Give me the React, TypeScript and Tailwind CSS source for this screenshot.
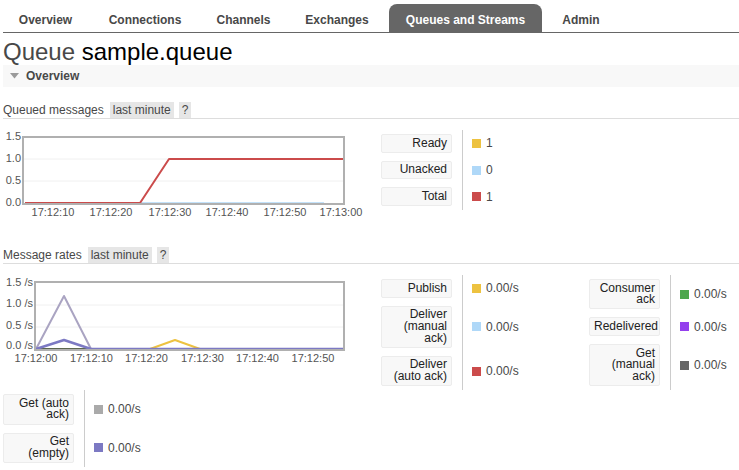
import React from "react";

type Row = { label: string[]; color: string; value: string };

function Legend({ rows, className = "" }: { rows: Row[]; className?: string }) {
  return (
    <div className={`grid grid-cols-[81px_auto] self-start ${className}`}>
      {rows.map((r, i) => (
        <React.Fragment key={i}>
          <div className="py-[4px] pr-[10px]">
            <div className="w-[71px] border border-[#ececec] rounded-[2px] bg-[#f8f8f8] px-[4px] py-[2.5px] text-right leading-[11.7px] text-[12px] text-[#222] whitespace-pre-line">
              {r.label.join("\n")}
            </div>
          </div>
          <div className="border-l border-[#cccccc] pl-[9px] flex items-center gap-[5px] text-[12px] text-[#484848]">
            <span className="inline-block w-[9px] h-[9px]" style={{ backgroundColor: r.color }} />
            <span>{r.value}</span>
          </div>
        </React.Fragment>
      ))}
    </div>
  );
}

function SectionHeader({ title }: { title: string }) {
  return (
    <div className="flex items-stretch h-[17px] border-b border-[#dddddd] text-[12px] text-[#484848]">
      <span className="leading-[17px]">{title}</span>
      <span className="ml-[6px] bg-[#e6e6e6] px-[3px] leading-[17px]">last minute</span>
      <span className="ml-[5px] bg-[#e6e6e6] px-[3px] leading-[17px]">?</span>
    </div>
  );
}

function QueuedChart() {
  const xs = [
    ["17:12:10", 50],
    ["17:12:20", 108],
    ["17:12:30", 167],
    ["17:12:40", 224],
    ["17:12:50", 282],
    ["17:13:00", 338],
  ] as const;
  const ys = [
    ["1.5", 7],
    ["1.0", 29],
    ["0.5", 51],
    ["0.0", 73],
  ] as const;
  return (
    <svg width="365" height="90" viewBox="0 0 365 90" className="shrink-0 font-[family-name:'Liberation_Sans',Arial,sans-serif]">
      <line x1="21" y1="29" x2="340" y2="29" stroke="#f0f0f0" strokeWidth="1" />
      <line x1="21" y1="51" x2="340" y2="51" stroke="#f0f0f0" strokeWidth="1" />
      <polyline points="137,73.5 321,73.5" fill="none" stroke="#afd8f8" strokeWidth="2.5" />
      <polyline points="22,73 137,73 166,29 340,29" fill="none" stroke="#cb4b4b" strokeWidth="2" strokeLinejoin="round" />
      <rect x="20" y="7" width="321" height="67" fill="none" stroke="#b0b0b0" strokeWidth="2" />
      {ys.map(([t, y]) => (
        <text key={t} x="18" y={y} textAnchor="end" dominantBaseline="middle" fontSize="11" fill="#545454">
          {t}
        </text>
      ))}
      {xs.map(([t, x]) => (
        <text key={t} x={x} y="83" textAnchor="middle" dominantBaseline="middle" fontSize="11" fill="#545454">
          {t}
        </text>
      ))}
    </svg>
  );
}

function RatesChart() {
  const xs = [
    ["17:12:00", 33],
    ["17:12:10", 88.5],
    ["17:12:20", 143.5],
    ["17:12:30", 199.5],
    ["17:12:40", 254.5],
    ["17:12:50", 310],
  ] as const;
  const ys = [
    ["1.5 /s", 8],
    ["1.0 /s", 29],
    ["0.5 /s", 51],
    ["0.0 /s", 71.5],
  ] as const;
  return (
    <svg width="365" height="90" viewBox="0 0 365 90" className="shrink-0 font-[family-name:'Liberation_Sans',Arial,sans-serif]">
      <line x1="33" y1="30" x2="340" y2="30" stroke="#f0f0f0" strokeWidth="1" />
      <line x1="33" y1="52" x2="340" y2="52" stroke="#f0f0f0" strokeWidth="1" />
      <polyline points="147,74 172,65 197,74" fill="none" stroke="#edc240" strokeWidth="2" strokeLinejoin="round" />
      <polyline points="33,74 88,74" fill="none" stroke="#5c6650" strokeWidth="2" />
      <polyline points="33,74 61,21 88,74" fill="none" stroke="#aaa4c2" strokeWidth="2" strokeLinejoin="round" />
      <polyline points="33,74 61,65 88,74 340,74" fill="none" stroke="#7c79c3" strokeWidth="2.5" strokeLinejoin="round" />
      <rect x="32" y="7" width="309" height="68" fill="none" stroke="#b0b0b0" strokeWidth="2" />
      {ys.map(([t, y]) => (
        <text key={t} x="30" y={y} textAnchor="end" dominantBaseline="middle" fontSize="11" fill="#545454">
          {t}
        </text>
      ))}
      {xs.map(([t, x]) => (
        <text key={t} x={x} y="84" textAnchor="middle" dominantBaseline="middle" fontSize="11" fill="#545454">
          {t}
        </text>
      ))}
    </svg>
  );
}

export default function App() {
  const tabs: [string, string][] = [
    ["Overview", "w-[85px]"],
    ["Connections", "w-[102px]"],
    ["Channels", "w-[83px]"],
    ["Exchanges", "w-[92px]"],
    ["Queues and Streams", "w-[153px]"],
    ["Admin", "w-[66px]"],
  ];
  return (
    <div className="w-[739px] h-[470px] bg-white pl-[3px] font-[family-name:'Liberation_Sans',Arial,sans-serif] text-[12px] text-[#484848] overflow-hidden">
      <div className="flex items-end gap-[6px] h-[33px] border-b border-[#666666]">
        {tabs.map(([t, w]) => {
          const active = t === "Queues and Streams";
          return (
            <div
              key={t}
              className={`${w} h-[28px] pt-[3px] flex items-center justify-center font-bold text-[12px] ${
                active ? "bg-[#666666] text-white rounded-t-[8px]" : "text-[#484848]"
              }`}
            >
              {t}
            </div>
          );
        })}
      </div>

      <h1 className="mt-[5px] text-[24px] leading-[27px]">
        <span className="text-[#484848]">Queue</span> <span className="text-black">sample.queue</span>
      </h1>

      <div className="h-[22px] bg-[#f8f8f8] flex items-center pl-[7px]">
        <svg width="9" height="6" viewBox="0 0 9 6" className="shrink-0">
          <polygon points="0,0 9,0 4.5,5.5" fill="#9a9a9a" />
        </svg>
        <span className="ml-[7px] font-bold text-[#484848]">Overview</span>
      </div>

      <div className="mt-[15px]">
        <SectionHeader title="Queued messages" />
        <div className="mt-[11px] flex">
          <QueuedChart />
          <Legend
            className="ml-[13px]"
            rows={[
              { label: ["Ready"], color: "#edc240", value: "1" },
              { label: ["Unacked"], color: "#afd8f8", value: "0" },
              { label: ["Total"], color: "#cb4b4b", value: "1" },
            ]}
          />
        </div>
      </div>

      <div className="mt-[27px]">
        <SectionHeader title="Message rates" />
        <div className="mt-[11px] flex">
          <RatesChart />
          <Legend
            className="ml-[13px] w-[208px]"
            rows={[
              { label: ["Publish"], color: "#edc240", value: "0.00/s" },
              { label: ["Deliver", "(manual", "ack)"], color: "#afd8f8", value: "0.00/s" },
              { label: ["Deliver", "(auto ack)"], color: "#cb4b4b", value: "0.00/s" },
            ]}
          />
          <Legend
            rows={[
              { label: ["Consumer", "ack"], color: "#4da74d", value: "0.00/s" },
              { label: ["Redelivered"], color: "#9440ed", value: "0.00/s" },
              { label: ["Get", "(manual", "ack)"], color: "#666666", value: "0.00/s" },
            ]}
          />
        </div>
        <div className="flex">
          <Legend
            rows={[
              { label: ["Get (auto", "ack)"], color: "#aaaaaa", value: "0.00/s" },
              { label: ["Get", "(empty)"], color: "#7c79c3", value: "0.00/s" },
            ]}
          />
        </div>
      </div>
    </div>
  );
}
